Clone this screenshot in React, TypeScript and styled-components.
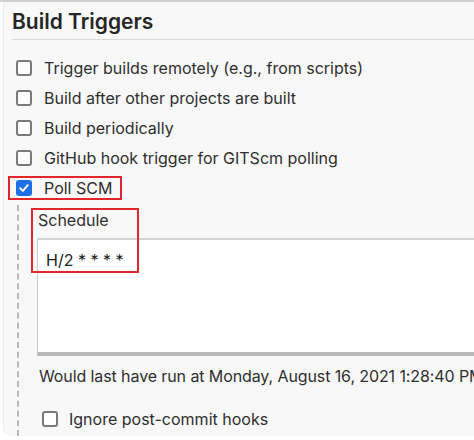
import { FC } from "react";
import styled, { createGlobalStyle } from "styled-components";

const GlobalStyle = createGlobalStyle`
  html, body {
    margin: 0;
    padding: 0;
    background: #ffffff;
    overflow: hidden;
  }
  body {
    font-family: Inter, "Liberation Sans", Arial, sans-serif;
    color: #2e2e2e;
  }
`;

const triggers = [
  { label: "Trigger builds remotely (e.g., from scripts)", checked: false },
  { label: "Build after other projects are built", checked: false },
  { label: "Build periodically", checked: false },
  { label: "GitHub hook trigger for GITScm polling", checked: false },
  { label: "Poll SCM", checked: true, marked: true },
];

const CheckBox: FC<{ checked?: boolean }> = ({ checked }) => (
  <StyledBox $checked={checked}>
    {checked && (
      <svg width="12" height="12" viewBox="0 0 12 12">
        <path
          d="M2.2 6.3 L4.9 8.9 L9.8 3.2"
          fill="none"
          stroke="#fff"
          strokeWidth="2"
          strokeLinecap="round"
          strokeLinejoin="round"
        />
      </svg>
    )}
  </StyledBox>
);

const App: FC = () => {
  return (
    <>
      <GlobalStyle />
      <StyledPage>
        <StyledPanel>
          <StyledTitle>Build Triggers</StyledTitle>
          <StyledList>
            {triggers.map((t) => (
              <StyledRow key={t.label} $marked={t.marked}>
                <CheckBox checked={t.checked} />
                {t.label}
              </StyledRow>
            ))}
          </StyledList>
          <StyledNested>
            <StyledScheduleMark />
            <StyledFieldLabel>Schedule</StyledFieldLabel>
            <StyledTextArea>H/2 * * * *</StyledTextArea>
            <StyledHint>
              Would last have run at Monday, August 16, 2021 1:28:40 PM
            </StyledHint>
            <StyledOption>
              <CheckBox />
              Ignore post-commit hooks
            </StyledOption>
          </StyledNested>
        </StyledPanel>
      </StyledPage>
    </>
  );
};

export default App;

const StyledPage = styled.div`
  width: 474px;
  height: 440px;
  border-top: 2px solid #cfcfcf;
  box-sizing: border-box;
  overflow: hidden;
`;

const StyledPanel = styled.div`
  margin-left: 3px;
  height: 434px;
  background: #f8f8f8;
  border-left: 1px solid #ececec;
  border-bottom-left-radius: 8px;
  display: flex;
  flex-direction: column;
`;

const StyledTitle = styled.div`
  margin: 6px 0 0 8px;
  padding-bottom: 3px;
  line-height: 28px;
  font-size: 21px;
  font-weight: 600;
  color: #262626;
  border-bottom: 1px solid #d9d9d9;
`;

const StyledList = styled.div`
  display: flex;
  flex-direction: column;
  align-items: flex-start;
  margin-top: 13px;
`;

const StyledRow = styled.label<{ $marked?: boolean }>`
  display: inline-flex;
  align-items: center;
  gap: 12px;
  height: 30px;
  box-sizing: border-box;
  margin-left: 4px;
  padding: 0 8px 0 6px;
  font-size: 16px;
  white-space: nowrap;
  border: 2px solid ${(p) => (p.$marked ? "#e3262c" : "transparent")};
  ${(p) => p.$marked && "height: 24px; margin: 3px 0 3px 4px;"}
`;

const StyledBox = styled.span<{ $checked?: boolean }>`
  width: 16px;
  height: 16px;
  box-sizing: border-box;
  border-radius: 3px;
  display: inline-flex;
  align-items: center;
  justify-content: center;
  flex-shrink: 0;
  background: ${(p) => (p.$checked ? "#1f6fe5" : "#ffffff")};
  border: ${(p) => (p.$checked ? "none" : "2px solid #7a7a7a")};
`;

const StyledNested = styled.div`
  position: relative;
  flex: 1;
  margin: 2px 0 0 13px;
  padding-left: 16px;
  border-left: 2px dashed #b8b8b8;
  display: flex;
  flex-direction: column;
  align-items: flex-start;
`;

const StyledScheduleMark = styled.div`
  position: absolute;
  left: 12px;
  top: 3px;
  width: 108px;
  height: 65px;
  box-sizing: border-box;
  border: 2px solid #e3262c;
  pointer-events: none;
  z-index: 2;
`;

const StyledFieldLabel = styled.div`
  margin: 5px 0 0 3px;
  font-size: 16px;
  line-height: 20px;
`;

const StyledTextArea = styled.div`
  margin-top: 8px;
  margin-left: 2px;
  width: 460px;
  height: 118px;
  box-sizing: border-box;
  padding: 10px 8px;
  background: #ffffff;
  border: 1px solid #cdcdcd;
  border-top: 2px solid #d2d2d2;
  border-bottom: 4px solid #b9b9b9;
  font-size: 16px;
  line-height: 20px;
  color: #222222;
`;

const StyledHint = styled.div`
  margin: 10px 0 0 4px;
  font-size: 16px;
  line-height: 20px;
  letter-spacing: -0.1px;
  white-space: nowrap;
`;

const StyledOption = styled.label`
  display: inline-flex;
  align-items: center;
  gap: 11px;
  margin: 23px 0 0 7px;
  font-size: 16px;
  line-height: 20px;
  white-space: nowrap;
`;
